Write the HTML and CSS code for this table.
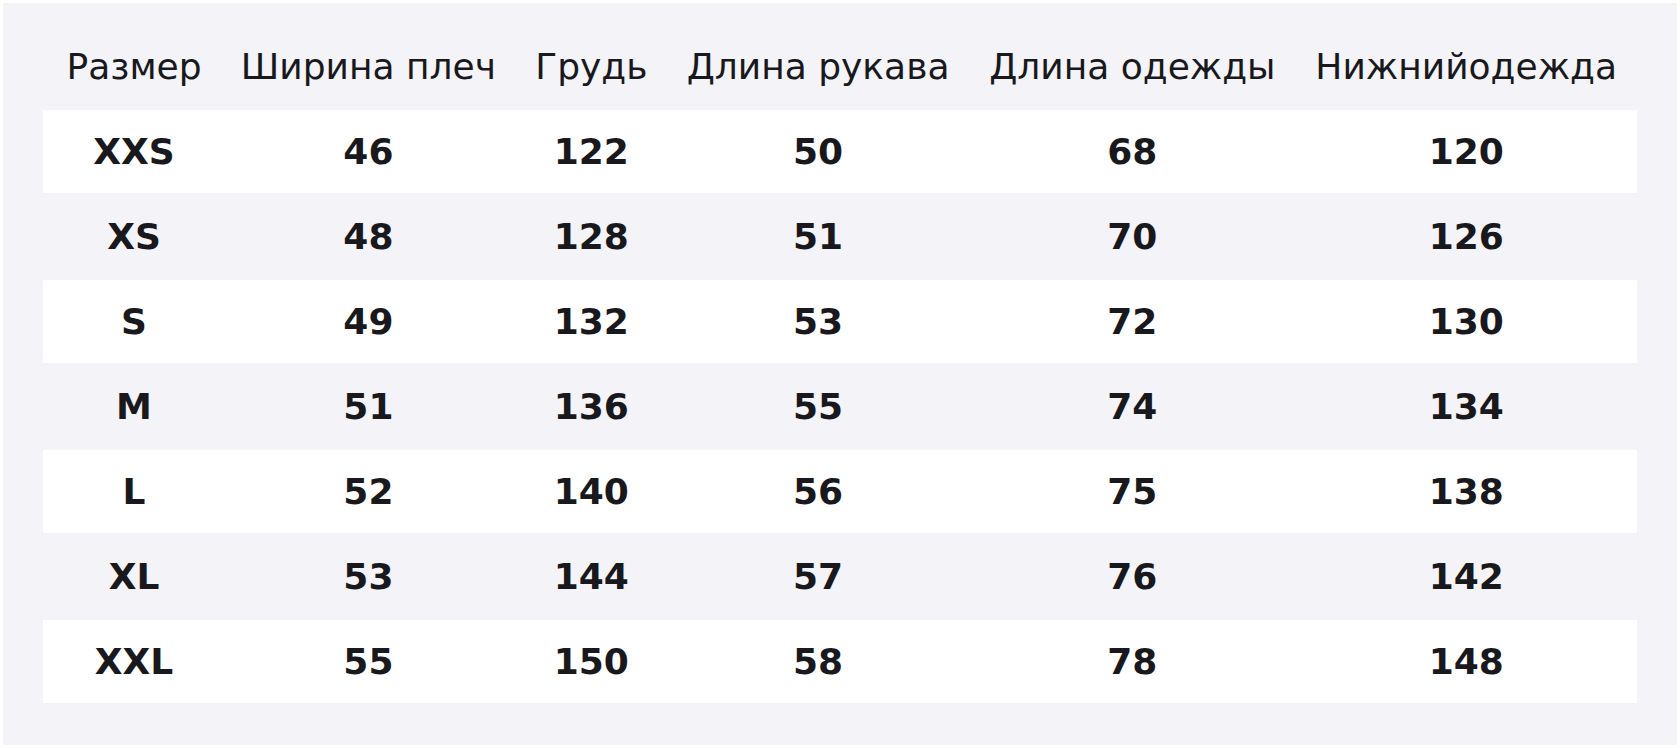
FILE: index.html
```html
<!DOCTYPE html>
<html lang="ru">
<head>
<meta charset="utf-8">
<title>Таблица размеров</title>
<link rel="stylesheet" href="styles.css">
</head>
<body>
<div class="sheet">
  <table class="sizes">
    <thead>
      <tr>
        <th>Размер</th>
        <th>Ширина плеч</th>
        <th>Грудь</th>
        <th>Длина рукава</th>
        <th>Длина одежды</th>
        <th>Нижнийодежда</th>
      </tr>
    </thead>
    <tbody>
      <tr><td>XXS</td><td>46</td><td>122</td><td>50</td><td>68</td><td>120</td></tr>
      <tr><td>XS</td><td>48</td><td>128</td><td>51</td><td>70</td><td>126</td></tr>
      <tr><td>S</td><td>49</td><td>132</td><td>53</td><td>72</td><td>130</td></tr>
      <tr><td>M</td><td>51</td><td>136</td><td>55</td><td>74</td><td>134</td></tr>
      <tr><td>L</td><td>52</td><td>140</td><td>56</td><td>75</td><td>138</td></tr>
      <tr><td>XL</td><td>53</td><td>144</td><td>57</td><td>76</td><td>142</td></tr>
      <tr><td>XXL</td><td>55</td><td>150</td><td>58</td><td>78</td><td>148</td></tr>
    </tbody>
  </table>
</div>
</body>
</html>
```
FILE: styles.css
```css
html, body {
  margin: 0;
  padding: 0;
  background: #ffffff;
}

body {
  padding: 3px;
  font-family: "DejaVu Sans", "Liberation Sans", sans-serif;
  color: #18181d;
}

.sheet {
  background: #f3f3f8;
  padding: 40px 40px 42px;
}

.sizes {
  width: 100%;
  border-collapse: collapse;
  border-spacing: 0;
}

.sizes th,
.sizes td {
  padding: 0 19px;
  text-align: center;
  font-size: 36px;
  line-height: 42px;
  white-space: nowrap;
}

.sizes th:first-child,
.sizes td:first-child {
  padding-left: 23px;
}

.sizes thead tr {
  height: 67px;
}

.sizes th {
  font-weight: normal;
  vertical-align: top;
  padding-top: 3px;
}

.sizes td {
  font-weight: bold;
  vertical-align: middle;
}

.sizes tbody tr:nth-child(odd) {
  height: 83px;
}

.sizes tbody tr:nth-child(odd) td {
  background: #ffffff;
}

.sizes tbody tr:nth-child(even) {
  height: 87px;
}
```
